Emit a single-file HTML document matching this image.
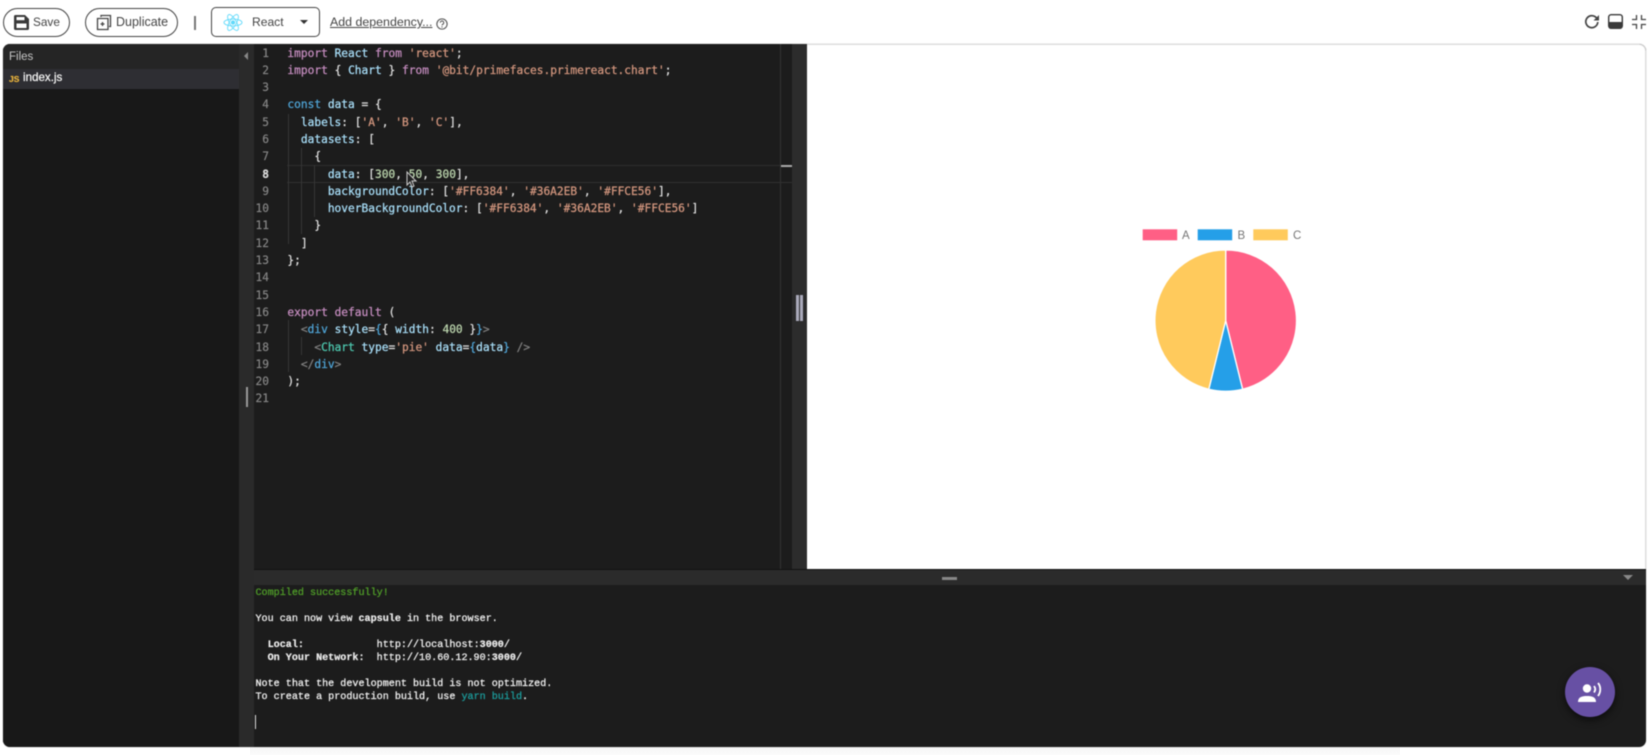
<!DOCTYPE html>
<html><head><meta charset="utf-8">
<style>
*{box-sizing:border-box}
html,body{margin:0;padding:0;width:1650px;height:755px;overflow:hidden;background:#fff;font-family:"Liberation Sans",sans-serif}
.a{position:absolute}
.btn{position:absolute;border:1px solid #444;background:#fff;color:#444;font-size:12.3px}
.code{position:absolute;left:0;top:0;font:11.2px/17.3px "DejaVu Sans Mono","Liberation Mono",monospace;white-space:pre;color:#bcdcf0;-webkit-text-stroke:.25px currentColor}
.ln{position:absolute;white-space:pre;width:30px;text-align:right;left:239px;font:11.2px/17.3px "DejaVu Sans Mono",monospace;color:#858585;-webkit-text-stroke:.2px currentColor}
.k{color:#c48cbe}.s{color:#d3967e}.b{color:#5a9bd0}.v{color:#a8def8}.n{color:#bcd6ae}.p{color:#dedede}.t{color:#4ec9b0}.g{color:#808080}.c{color:#4fa4d6}
.term{position:absolute;left:255.5px;font:bold 10.1px/13px "Liberation Mono",monospace;white-space:pre;color:#ececec;-webkit-text-stroke:.2px currentColor}
.term span.r{font-weight:normal;-webkit-text-stroke:.3px currentColor}
</style></head>
<body>
<div class="a" style="left:250px;top:745px;width:1150px;height:10px;background:linear-gradient(#f4f4f4,#fbfbfb)"></div>
<div class="a" style="left:0;top:0;width:1650px;height:755px;filter:blur(.45px)">

<div class="btn" style="left:3px;top:8px;width:67px;height:29px;border-radius:15px">
 <svg class="a" style="left:9px;top:5px" width="17" height="17" viewBox="0 0 17 17"><path d="M2.5 1h9.500l4 4v9.500a1.500 1.500 0 0 1-1.500 1.500h-12a1.500 1.500 0 0 1-1.500-1.500v-12a1.500 1.500 0 0 1 1.500-1.500z" fill="#3a3a3a"/><rect x="3.500" y="3" width="8" height="3.200" fill="#fff"/><rect x="3.500" y="9.500" width="10" height="4.500" fill="#fff"/></svg>
 <span class="a" style="left:29px;top:6px;font-size:11.8px">Save</span>
</div>
<div class="btn" style="left:85px;top:8px;width:93px;height:29px;border-radius:15px">
 <svg class="a" style="left:10px;top:5px" width="16" height="18" viewBox="0 0 16 18" fill="none" stroke="#444" stroke-width="1.300"><path d="M5 3V1.500h9.500v11H13"/><path d="M8 4.500H12V15.500H1.500V4.500z"/><path d="M4.500 10h4M6.500 8v4"/></svg>
 <span class="a" style="left:30px;top:6px;font-size:12.5px">Duplicate</span>
</div>
<div class="a" style="left:194px;top:16px;width:1.500px;height:14px;background:#777"></div>
<div class="btn" style="left:211px;top:7px;width:109px;height:30px;border-radius:5px">
 <svg class="a" style="left:11px;top:5px" width="20" height="19" viewBox="-10 -9.500 20 19" fill="none" stroke="#61dafb" stroke-width=".9"><ellipse rx="9" ry="3.400"/><ellipse rx="9" ry="3.400" transform="rotate(60)"/><ellipse rx="9" ry="3.400" transform="rotate(120)"/><circle r="1.700" fill="#61dafb"/></svg>
 <span class="a" style="left:40px;top:7px;font-size:12.1px">React</span>
 <div class="a" style="left:88px;top:12px;width:0;height:0;border:4.500px solid transparent;border-top:4.500px solid #333;border-bottom:0"></div>
</div>
<div class="a" style="left:330px;top:15px;font-size:12.4px;color:#444;text-decoration:underline;white-space:nowrap">Add dependency...</div>
<svg class="a" style="left:435.500px;top:17.500px" width="12" height="12" viewBox="0 0 11 11" fill="none" stroke="#555"><circle cx="5.500" cy="5.500" r="4.700"/><path d="M3.900 4.300a1.600 1.600 0 1 1 2.400 1.400c-.6.300-.8.600-.8 1.100M5.500 7.700v1"/></svg>

<svg class="a" style="left:1584px;top:13px" width="16" height="16" viewBox="0 0 16 16" fill="none" stroke="#444" stroke-width="1.700"><path d="M13.800 9a6 6 0 1 1-1.900-4.700L14 6"/><path d="M15 2v5.500H9.500z" fill="#444" stroke="none"/></svg>
<svg class="a" style="left:1608px;top:14px" width="15" height="15" viewBox="0 0 15 15"><rect x=".7" y=".7" width="13.600" height="13.600" rx="2.500" fill="#fff" stroke="#3a3a3a" stroke-width="1.400"/><path d="M1 8h13v4a2 2 0 0 1-2 2H3a2 2 0 0 1-2-2z" fill="#3a3a3a"/></svg>
<svg class="a" style="left:1631px;top:14px" width="16" height="16" viewBox="0 0 16 16" fill="none" stroke="#444" stroke-width="1.300"><path d="M5.500 1v4.500H1M10.500 1v4.500H15M5.500 15v-4.500H1M10.500 15v-4.500H15"/></svg>

<!-- IDE frame -->
<div class="a" style="left:3px;top:44px;width:1643px;height:703px;background:#1c1c1c;border-radius:7px;overflow:hidden;box-shadow:0 0 1px #999"></div>
<div class="a" style="left:3px;top:89px;width:236px;height:658px;background:#181818;border-radius:0 0 0 7px"></div>
<div class="a" style="left:807px;top:44px;width:839px;height:526px;background:#fff;border:1px solid #ddd;border-left:0;border-radius:0 7px 0 0"></div>
<div class="a" style="left:3px;top:44px;width:236px;height:25px;background:#252525;border-radius:7px 0 0 0"></div>
<div class="a" style="left:9px;top:51px;font-size:11.500px;color:#c8c8c8">Files</div>
<div class="a" style="left:3px;top:69px;width:236px;height:20px;background:#2e2e33"></div>
<div class="a" style="left:9px;top:74px;font:bold 8.500px 'Liberation Sans',sans-serif;color:#e8b23c;-webkit-text-stroke:.2px currentColor">JS</div>
<div class="a" style="left:23px;top:71px;font-size:11.600px;color:#f4f4f4;-webkit-text-stroke:.25px currentColor">index.js</div>
<div class="a" style="left:239px;top:44px;width:15px;height:703px;background:#2a2a2a"></div>
<div class="a" style="left:244px;top:52px;width:0;height:0;border:4px solid transparent;border-right:4.500px solid #888;border-left:0"></div>
<div class="a" style="left:245.500px;top:387px;width:2px;height:20px;background:#999"></div>
<div class="a" style="left:792px;top:44px;width:15px;height:526px;background:#2c2c2c"></div>
<div class="a" style="left:796px;top:295px;width:2.500px;height:26px;background:#aab"></div>
<div class="a" style="left:800px;top:295px;width:2.500px;height:26px;background:#aab"></div>
<div class="a" style="left:780px;top:44px;width:1px;height:526px;background:#333"></div>
<div class="a" style="left:781px;top:165px;width:11px;height:1.500px;background:#aaa"></div>
<div class="a" style="left:287px;top:165px;width:493px;height:1px;background:#2e2e2e"></div>
<div class="a" style="left:287px;top:182px;width:505px;height:1px;background:#303030"></div>
<!-- indent guides -->
<div class="a" style="left:288px;top:114px;width:1px;height:130px;background:#353535"></div>
<div class="a" style="left:301px;top:148px;width:1px;height:86px;background:#353535"></div>
<div class="a" style="left:314px;top:165px;width:1px;height:52px;background:#353535"></div>
<div class="a" style="left:288px;top:320px;width:1px;height:52px;background:#353535"></div>
<div class="a" style="left:301px;top:337px;width:1px;height:18px;background:#353535"></div>

<div class="ln" style="top:44.5px">1
2
3
4
5
6
7
<span style="color:#ddd;font-weight:bold">8</span>
9
10
11
12
13
14
15
16
17
18
19
20
21</div>
<div class="a" style="left:287.4px;top:44.5px"><div class="code"><span class="k">import</span> <span class="v">React</span> <span class="k">from</span> <span class="s">'react'</span><span class="p">;</span>
<span class="k">import</span> <span class="p">{</span> <span class="v">Chart</span> <span class="p">}</span> <span class="k">from</span> <span class="s">'@bit/primefaces.primereact.chart'</span><span class="p">;</span>

<span class="c">const</span> <span class="v">data</span> <span class="p">=</span> <span class="p">{</span>
  <span class="v">labels</span><span class="p">:</span> <span class="p">[</span><span class="s">'A'</span><span class="p">,</span> <span class="s">'B'</span><span class="p">,</span> <span class="s">'C'</span><span class="p">],</span>
  <span class="v">datasets</span><span class="p">:</span> <span class="p">[</span>
    <span class="p">{</span>
      <span class="v">data</span><span class="p">:</span> <span class="p">[</span><span class="n">300</span><span class="p">,</span> <span class="n">50</span><span class="p">,</span> <span class="n">300</span><span class="p">],</span>
      <span class="v">backgroundColor</span><span class="p">:</span> <span class="p">[</span><span class="s">'#FF6384'</span><span class="p">,</span> <span class="s">'#36A2EB'</span><span class="p">,</span> <span class="s">'#FFCE56'</span><span class="p">],</span>
      <span class="v">hoverBackgroundColor</span><span class="p">:</span> <span class="p">[</span><span class="s">'#FF6384'</span><span class="p">,</span> <span class="s">'#36A2EB'</span><span class="p">,</span> <span class="s">'#FFCE56'</span><span class="p">]</span>
    <span class="p">}</span>
  <span class="p">]</span>
<span class="p">};</span>


<span class="k">export</span> <span class="k">default</span> <span class="p">(</span>
  <span class="g">&lt;</span><span class="c">div</span> <span class="v">style</span><span class="p">=</span><span class="c">{</span><span class="p">{ </span><span class="v">width</span><span class="p">:</span> <span class="n">400</span> <span class="p">}</span><span class="c">}</span><span class="g">&gt;</span>
    <span class="g">&lt;</span><span class="t">Chart</span> <span class="v">type</span><span class="p">=</span><span class="s">'pie'</span> <span class="v">data</span><span class="p">=</span><span class="c">{</span><span class="v">data</span><span class="c">}</span> <span class="g">/&gt;</span>
  <span class="g">&lt;/</span><span class="c">div</span><span class="g">&gt;</span>
<span class="p">);</span></div></div>
<svg class="a" style="left:406px;top:171px" width="12" height="18" viewBox="0 0 12 18"><path d="M1 1v13l3-3 2 5 2-1-2-5h4z" fill="#222" stroke="#ccc" stroke-width="1"/></svg>

<!-- Chart -->
<svg class="a" style="left:1130px;top:215px" width="200" height="180" viewBox="1130 215 200 180">
<rect x="1142.700" y="229.300" width="34.500" height="11" fill="#ff5f85"/>
<rect x="1197.700" y="229.300" width="34.500" height="11" fill="#259fe8"/>
<rect x="1253.300" y="229.300" width="34.500" height="11" fill="#ffca5c"/>
<g font-family="Liberation Sans, sans-serif" font-size="11.500" fill="#777"><text x="1182" y="239">A</text><text x="1237.500" y="239">B</text><text x="1293" y="239">C</text></g>
<g stroke="#fff" stroke-width="1.300">
<path d="M1225.700 320.600V250A70.600 70.600 0 0 1 1242.600 389.200z" fill="#ff5f85"/>
<path d="M1225.700 320.600L1242.600 389.200A70.600 70.600 0 0 1 1208.800 389.200z" fill="#259fe8"/>
<path d="M1225.700 320.600L1208.800 389.200A70.600 70.600 0 0 1 1225.700 250z" fill="#ffca5c"/>
</g></svg>

<!-- Terminal -->
<div class="a" style="left:254px;top:570px;width:1392px;height:15px;background:#2b2b2b"></div>
<div class="a" style="left:254px;top:568.500px;width:1392px;height:1.500px;background:#111"></div>
<div class="a" style="left:942px;top:577px;width:15px;height:2.500px;background:#888"></div>
<div class="a" style="left:1623px;top:575px;width:0;height:0;border:5px solid transparent;border-top:5px solid #888;border-bottom:0"></div>
<div class="term" style="top:586.700px;color:#4e9a28;font-weight:normal;-webkit-text-stroke:.3px currentColor">Compiled successfully!</div>
<div class="term" style="top:612.700px"><span class="r">You can now view </span>capsule<span class="r"> in the browser.</span></div>
<div class="term" style="top:638.700px">  Local:<span class="r">            http://localhost:</span>3000<span class="r">/</span></div>
<div class="term" style="top:651.700px">  On Your Network:<span class="r">  http://10.60.12.90:</span>3000<span class="r">/</span></div>
<div class="term" style="top:677.700px"><span class="r">Note that the development build is not optimized.</span></div>
<div class="term" style="top:690.700px"><span class="r">To create a production build, use </span><span class="r" style="color:#1c9a9a">yarn build</span><span class="r">.</span></div>
<div class="a" style="left:255px;top:715px;width:1.200px;height:14px;background:#ddd"></div>

<!-- Fab -->
<div class="a" style="left:1565px;top:667px;width:50px;height:50px;border-radius:50%;background:#6750a4;box-shadow:0 3px 8px rgba(0,0,0,.6)"></div>
<svg class="a" style="left:1577px;top:681px" width="27" height="22" viewBox="0 0 27 22"><circle cx="10" cy="7.500" r="4.200" fill="#fff"/><path d="M1 21c0-5 4-6 9-6s9 1 9 6z" fill="#fff"/><path d="M17 5c1.500 2 1.500 4.500 0 6.500M21 2c3 3.500 3 9 0 13" fill="none" stroke="#fff" stroke-width="1.800"/></svg>
</div>
</body></html>
